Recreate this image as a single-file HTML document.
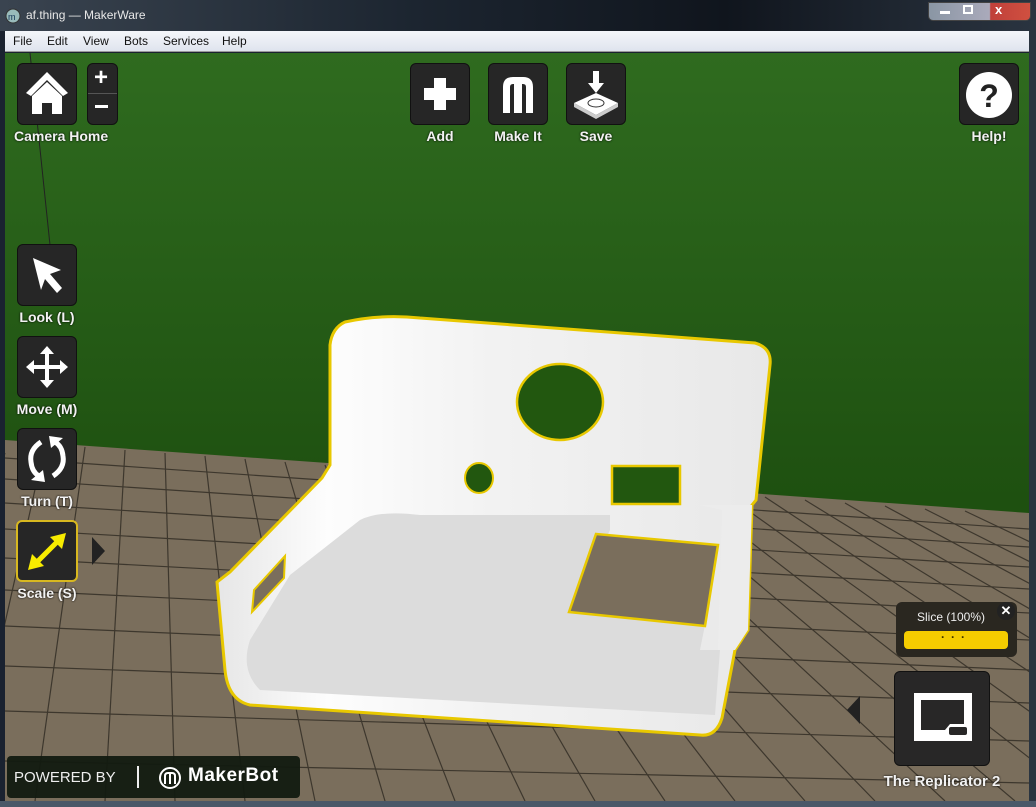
<!DOCTYPE html>
<html><head><meta charset="utf-8"><style>
*{margin:0;padding:0;box-sizing:border-box}
body{width:1036px;height:807px;overflow:hidden;background:#1a2230;font-family:"Liberation Sans",sans-serif;position:relative}
.title{position:absolute;left:0;top:0;width:1036px;height:31px;background:linear-gradient(90deg,#3a4450 0,#1c2530 40%,#10151d 70%,#2a3440 100%)}
.title span{position:absolute;left:26px;top:8px;color:#e8e8e8;font-size:12px}
.menu{position:absolute;left:5px;top:31px;width:1024px;height:21px;background:linear-gradient(#f4f6fa,#dfe4ee);border-bottom:1px solid #999}
.menu span{position:absolute;top:3px;font-size:12px;color:#111}
.vp{position:absolute;left:5px;top:53px;width:1024px;height:748px;overflow:hidden}
.btn{position:absolute;background:#262626;border-radius:6px;border:1px solid #111}
.lbl{position:absolute;color:#f2f2f2;font-weight:bold;font-size:14px;text-shadow:0 0 2px #000;white-space:nowrap;text-align:center}
</style></head><body>
<div class="title"><svg style="position:absolute;left:5px;top:8px" width="16" height="16"><circle cx="8" cy="8" r="7" fill="#9bb" stroke="#333"/><text x="3" y="12" font-size="9" fill="#135">m</text></svg><span>af.thing — MakerWare</span>
<div style="position:absolute;left:928px;top:2px;width:103px;height:19px;border-radius:0 0 5px 5px;background:linear-gradient(90deg,#8a96a4 0,#aab 60%,#c0403a 61%,#d05040 100%);border:1px solid #444"></div>
<div style="position:absolute;left:940px;top:11px;width:10px;height:3px;background:#fff"></div>
<div style="position:absolute;left:963px;top:5px;width:10px;height:9px;border:2px solid #fff"></div>
<div style="position:absolute;left:995px;top:2px;color:#fff;font-weight:bold;font-size:13px">x</div>
</div>
<div class="menu"><span style="left:8px">File</span><span style="left:42px">Edit</span><span style="left:78px">View</span><span style="left:119px">Bots</span><span style="left:158px">Services</span><span style="left:217px">Help</span></div>
<div class="vp">
<svg width="1024" height="748" style="position:absolute;left:0;top:0">
<defs><linearGradient id="g" x1="0" y1="0" x2="0" y2="1"><stop offset="0" stop-color="#2f6b1f"/><stop offset="0.6" stop-color="#1e5010"/></linearGradient>
<linearGradient id="w" x1="0" y1="0" x2="1" y2="0"><stop offset="0" stop-color="#e6e6e6"/><stop offset="0.2" stop-color="#fdfdfd"/><stop offset="0.5" stop-color="#f2f2f2"/><stop offset="1" stop-color="#e8e8e8"/></linearGradient></defs>
<rect width="1024" height="748" fill="url(#g)"/>
<polygon points="0,387 1024,460 1024,748 0,748" fill="#7a6e5c"/>
<g stroke="#2f2a22" stroke-width="1.2" opacity="0.8">
<line x1="0" y1="405" x2="1024" y2="476"/><line x1="0" y1="426" x2="1024" y2="494"/><line x1="0" y1="450" x2="1024" y2="514"/><line x1="0" y1="476" x2="1024" y2="536"/><line x1="0" y1="505" x2="1024" y2="560"/><line x1="0" y1="537" x2="1024" y2="587"/><line x1="0" y1="573" x2="1024" y2="617"/><line x1="0" y1="613" x2="1024" y2="650"/><line x1="0" y1="658" x2="1024" y2="688"/><line x1="0" y1="708" x2="1024" y2="730"/>
<line x1="0" y1="400" x2="-110" y2="748"/><line x1="40" y1="392" x2="-40" y2="748"/><line x1="80" y1="394" x2="30" y2="748"/><line x1="120" y1="397" x2="100" y2="748"/><line x1="160" y1="400" x2="170" y2="748"/><line x1="200" y1="403" x2="240" y2="748"/><line x1="240" y1="406" x2="310" y2="748"/><line x1="280" y1="409" x2="380" y2="748"/><line x1="320" y1="412" x2="450" y2="748"/><line x1="360" y1="415" x2="520" y2="748"/><line x1="400" y1="418" x2="590" y2="748"/><line x1="440" y1="420" x2="660" y2="748"/><line x1="480" y1="423" x2="730" y2="748"/><line x1="520" y1="426" x2="800" y2="748"/><line x1="560" y1="429" x2="870" y2="748"/><line x1="600" y1="432" x2="940" y2="748"/><line x1="640" y1="435" x2="1010" y2="748"/><line x1="680" y1="438" x2="1080" y2="748"/><line x1="720" y1="441" x2="1150" y2="748"/><line x1="760" y1="444" x2="1220" y2="748"/><line x1="800" y1="447" x2="1290" y2="748"/><line x1="840" y1="450" x2="1360" y2="748"/><line x1="880" y1="453" x2="1430" y2="748"/><line x1="920" y1="456" x2="1500" y2="748"/><line x1="960" y1="458" x2="1570" y2="748"/>
</g>
<line x1="25" y1="0" x2="50" y2="240" stroke="#222" stroke-width="1"/>
<g transform="translate(-5,-53)">
<path d="M345,322 Q380,314 420,318 L755,343 Q772,348 770,365 L756,500 L752,505 L748,630 L735,650 L722,718 Q716,737 700,735 L250,705 Q228,700 225,670 L217,582 L230,572 L322,478 L330,465 L330,345 Q332,328 345,322 Z" fill="url(#w)" stroke="#e8c800" stroke-width="3"/>
<path d="M360,520 Q380,510 420,515 L610,515 L610,530 L570,612 L705,625 L700,650 L720,650 L715,715 L260,690 Q240,670 250,640 L290,575 Z" fill="#dcdcdc"/>
<path d="M700,505 L752,505 L748,630 L735,650 L718,650 L722,510 Z" fill="#ececec"/>
<ellipse cx="560" cy="402" rx="43" ry="38" fill="#22570f" stroke="#e8c800" stroke-width="2.5"/>
<ellipse cx="479" cy="478" rx="14" ry="15" fill="#22570f" stroke="#e8c800" stroke-width="2"/>
<rect x="612" y="466" width="68" height="38" fill="#22570f" stroke="#e8c800" stroke-width="2.5"/>
<polygon points="596,534 718,545 705,626 569,612" fill="#7a6e5c" stroke="#e8c800" stroke-width="2.5"/>
<polygon points="252,612 284,578 285,556 254,590" fill="#7a6e5c" stroke="#e8c800" stroke-width="2"/>
</g>
</svg>
<div class="btn" style="left:12px;top:10px;width:60px;height:62px"></div>
<svg style="position:absolute;left:18px;top:16px" width="48" height="50"><path d="M24,3 L45,24 L40,27 L24,11 L8,27 L3,24 Z" fill="#fff"/><path d="M9,27 L24,13 L39,27 L39,45 L29,45 L29,34 L19,34 L19,45 L9,45 Z" fill="#fff"/></svg>
<div class="btn" style="left:82px;top:10px;width:31px;height:62px"></div>
<div style="position:absolute;left:83px;top:40px;width:29px;height:1px;background:#555"></div>
<div style="position:absolute;left:89px;top:11px;color:#fff;font-weight:bold;font-size:24px">+</div>
<div style="position:absolute;left:90px;top:52px;width:13px;height:3px;background:#fff"></div>
<div class="lbl" style="left:9px;top:75px">Camera Home</div>
<div class="btn" style="left:405px;top:10px;width:60px;height:62px"></div>
<svg style="position:absolute;left:405px;top:10px" width="60" height="62"><path d="M24,15 h12 v10 h10 v12 h-10 v10 h-12 v-10 h-10 v-12 h10 Z" fill="#fff"/></svg>
<div class="lbl" style="left:405px;top:75px;width:60px">Add</div>
<div class="btn" style="left:483px;top:10px;width:60px;height:62px"></div>
<svg style="position:absolute;left:483px;top:10px" width="60" height="62"><path d="M15,50 V24 Q15,14 25,14 H35 Q45,14 45,24 V50 H38 V24 Q38,21 35,21 H34 V50 H26 V21 H25 Q22,21 22,24 V50 Z" fill="#fff"/></svg>
<div class="lbl" style="left:478px;top:75px;width:70px">Make It</div>
<div class="btn" style="left:561px;top:10px;width:60px;height:62px"></div>
<svg style="position:absolute;left:561px;top:10px" width="60" height="62"><path d="M27,8 h6 v12 h5 l-8,10 l-8,-10 h5 Z" fill="#fff"/><path d="M8,40 L30,30 L52,40 L30,52 Z" fill="#fff"/><path d="M8,40 L30,52 L52,40 L52,44 L30,56 L8,44 Z" fill="#ccc"/><ellipse cx="30" cy="40" rx="8" ry="4" fill="none" stroke="#333"/></svg>
<div class="lbl" style="left:561px;top:75px;width:60px">Save</div>
<div class="btn" style="left:954px;top:10px;width:60px;height:62px"></div>
<svg style="position:absolute;left:954px;top:10px" width="60" height="62"><circle cx="30" cy="32" r="23" fill="#fff"/><text x="30" y="44" text-anchor="middle" font-size="32" font-weight="bold" font-family="Liberation Sans" fill="#222">?</text></svg>
<div class="lbl" style="left:954px;top:75px;width:60px">Help!</div>

<div class="btn" style="left:12px;top:191px;width:60px;height:62px"></div>
<svg style="position:absolute;left:12px;top:191px" width="60" height="62"><path d="M16,14 L44,26 L33,30 L45,44 L40,49 L28,35 L24,46 Z" fill="#fff"/></svg>
<div class="lbl" style="left:2px;top:256px;width:80px">Look (L)</div>
<div class="btn" style="left:12px;top:283px;width:60px;height:62px"></div>
<svg style="position:absolute;left:12px;top:283px" width="60" height="62"><path d="M30,10 L37,18 H32 V29 H43 V24 L51,31 L43,38 V33 H32 V44 H37 L30,52 L23,44 H28 V33 H17 V38 L9,31 L17,24 V29 H28 V18 H23 Z" fill="#fff"/></svg>
<div class="lbl" style="left:2px;top:348px;width:80px">Move (M)</div>
<div class="btn" style="left:12px;top:375px;width:60px;height:62px"></div>
<svg style="position:absolute;left:12px;top:375px" width="60" height="62" fill="none" stroke="#fff" stroke-width="5"><path d="M24,14 Q12,22 14,34 Q15,44 22,48"/><path d="M36,48 Q48,40 46,28 Q45,18 38,14"/><path d="M14,52 L28,54 L26,42 Z M46,10 L32,8 L34,20 Z" fill="#fff" stroke="none"/></svg>
<div class="lbl" style="left:2px;top:440px;width:80px">Turn (T)</div>
<div class="btn" style="left:11px;top:467px;width:62px;height:62px;border:2px solid #d8b820"></div>
<svg style="position:absolute;left:11px;top:467px" width="62" height="62"><path d="M18,45 L44,19" stroke="#f8ec00" stroke-width="5"/><path d="M12,50 L16,34 L28,46 Z M50,13 L46,29 L34,17 Z" fill="#f8ec00"/></svg>
<div class="lbl" style="left:2px;top:532px;width:80px">Scale (S)</div>
<svg style="position:absolute;left:86px;top:483px" width="16" height="30"><path d="M1,1 L14,15 L1,29 Z" fill="#222"/></svg>

<div style="position:absolute;left:2px;top:703px;width:293px;height:42px;background:#121a10;border-radius:4px;opacity:0.95"></div>
<div style="position:absolute;left:9px;top:716px;color:#eee;font-size:15px">POWERED BY</div>
<div style="position:absolute;left:132px;top:713px;width:2px;height:22px;background:#eee"></div>
<svg style="position:absolute;left:153px;top:713px" width="24" height="24"><circle cx="12" cy="12" r="10" fill="none" stroke="#fff" stroke-width="2"/><path d="M7,18 V10 Q7,7 10,7 H14 Q17,7 17,10 V18 M12,8 V18" fill="none" stroke="#fff" stroke-width="2"/></svg>
<div style="position:absolute;left:183px;top:712px;color:#fff;font-size:19px;font-weight:bold;letter-spacing:0.5px">MakerBot</div>

<div style="position:absolute;left:891px;top:549px;width:121px;height:55px;background:#2a2720;border-radius:6px"></div>
<div style="position:absolute;left:891px;top:557px;width:110px;text-align:center;color:#eee;font-size:12px">Slice (100%)</div>
<div style="position:absolute;left:992px;top:549px;width:18px;height:18px;border-radius:9px;background:#222;color:#fff;font-weight:bold;font-size:13px;text-align:center;line-height:17px">✕</div>
<div style="position:absolute;left:899px;top:578px;width:104px;height:18px;background:#f5cc00;border-radius:4px;text-align:center;color:#3a3000;font-size:12px;line-height:12px;font-weight:bold;letter-spacing:6px">···</div>
<svg style="position:absolute;left:840px;top:642px" width="16" height="30"><path d="M15,1 L2,15 L15,29 Z" fill="#222"/></svg>
<div class="btn" style="left:889px;top:618px;width:96px;height:95px;background:#282727"></div>
<svg style="position:absolute;left:889px;top:618px" width="96" height="95"><rect x="20" y="22" width="58" height="48" fill="#fff"/><path d="M27,29 H70 V53 H56 L51,59 H27 Z" fill="#282727"/><rect x="55" y="56" width="18" height="8" rx="2" fill="#282727"/></svg>
<div class="lbl" style="left:869px;top:720px;width:136px;font-size:15px">The Replicator 2</div>
</div>
<div style="position:absolute;left:1029px;top:31px;width:7px;height:776px;background:#2a3440"></div>
<div style="position:absolute;left:0;top:801px;width:1036px;height:6px;background:#4a5868"></div>
</body></html>
